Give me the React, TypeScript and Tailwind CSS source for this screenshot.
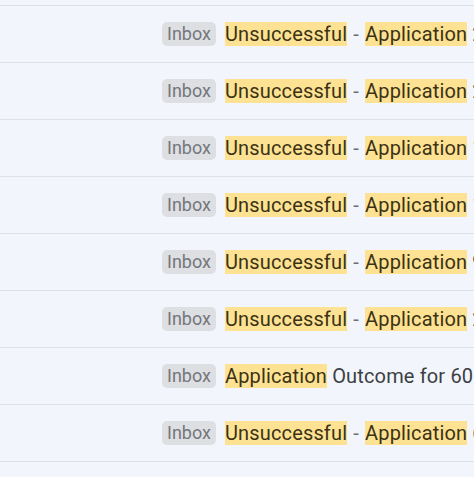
const rows = [
  { kind: 'u', rest: ' 2024 Graduate Program' },
  { kind: 'u', rest: ' 2024 Summer Internship' },
  { kind: 'u', rest: ' 1234 Software Engineer' },
  { kind: 'u', rest: ' 1187 Data Analyst' },
  { kind: 'u', rest: ' 9921 Product Manager' },
  { kind: 'u', rest: ' 2310 Research Assistant' },
  { kind: 'o', rest: ' Outcome for 6012345 Analyst' },
  { kind: 'u', rest: ' 6543 Operations Associate' },
]

function Mark({ children }: { children: string }) {
  return <span className="bg-[#fde293] text-[#3c3214]">{children}</span>
}

export default function App() {
  return (
    <div
      className="w-[474px] h-[477px] overflow-hidden bg-[#f2f6fc]"
      style={{ fontFamily: 'Roboto, "Noto Sans", sans-serif' }}
    >
      <div className="h-[6px] border-b border-[#dde2ea]" />
      {rows.map((r, i) => (
        <div
          key={i}
          className="h-[57px] border-b border-[#dde2ea] flex items-center pl-[162px] whitespace-nowrap overflow-hidden"
        >
          <span className="shrink-0 h-[24px] px-[5px] rounded-[5px] bg-[#dddfe3] text-[#74777c] text-[18px] leading-[24px] mr-[9px]">
            Inbox
          </span>
          <span className="text-[20px] leading-[24px] tracking-[0.15px] text-[#3c4043]">
            {r.kind === 'u' ? (
              <>
                <Mark>Unsuccessful</Mark>
                <span className="text-[#6b6e73] px-[1px]"> - </span>
                <Mark>Application</Mark>
                {r.rest}
              </>
            ) : (
              <>
                <Mark>Application</Mark>
                {r.rest}
              </>
            )}
          </span>
        </div>
      ))}
    </div>
  )
}
